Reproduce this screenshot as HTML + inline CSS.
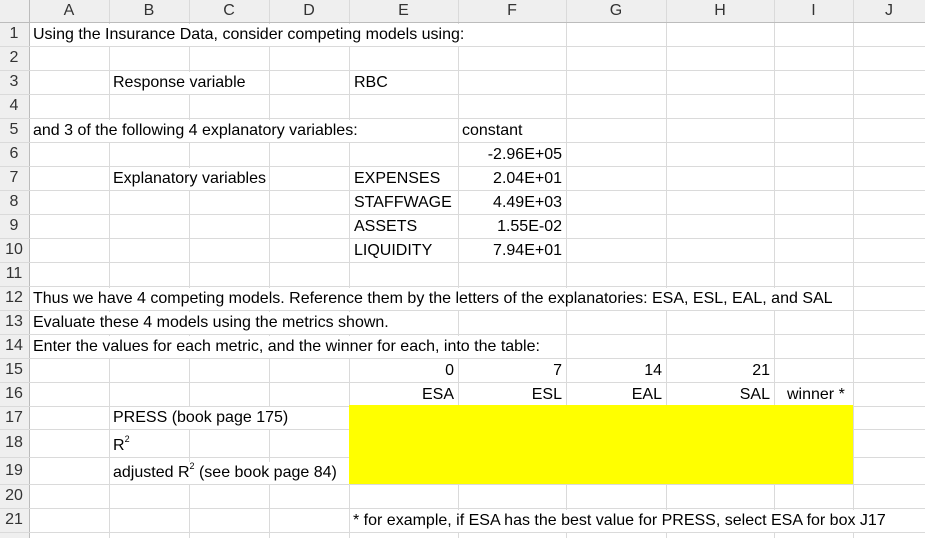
<!DOCTYPE html>
<html><head><style>
body{margin:0;width:925px;height:538px;overflow:hidden;background:#fff;font-family:"Liberation Sans",sans-serif;font-size:16px;color:#000;position:relative}
.v{position:absolute;top:0;height:538px;width:1px;background:#dadada}
.h{position:absolute;left:0;width:925px;height:1px;background:#dadada}
.t{position:absolute;white-space:nowrap;line-height:22px;height:22px;margin-top:2px}
.w{background:#fff;padding-right:3px}
.r{text-align:right}
.ch{position:absolute;top:0;height:22px;line-height:22px;text-align:center;color:#333;font-size:16px}
.rh{position:absolute;left:0;width:28px;text-align:center;color:#333;font-size:16px}
sup{font-size:9px;vertical-align:8px;line-height:0}
</style></head><body>
<div style="position:absolute;left:0;top:0;width:925px;height:22px;background:#efefef"></div>
<div style="position:absolute;left:0;top:0;width:29px;height:538px;background:#efefef"></div>
<div id="g"></div>
<div style="position:absolute;left:349px;top:405px;width:504px;height:79px;background:#ffff00"></div>
<script>
var xs=[29,109,189,269,349,458,566,666,774,853];
var ys=[22];for(var i=1;i<=16;i++)ys.push(22+i*24);ys.push(429,457,484,508,532);
var h='';
xs.forEach(function(x){h+='<div class="v" style="left:'+x+'px'+(x==29?';background:#bcbcbc':'')+'"></div>';});
ys.forEach(function(y){h+='<div class="h" style="top:'+y+'px'+(y==22?';background:#bcbcbc':'')+'"></div>';});
var L='ABCDEFGHIJ';var ex=xs.concat([925]);
for(var i=0;i<10;i++)h+='<div class="ch" style="left:'+ex[i]+'px;width:'+(ex[i+1]-ex[i])+'px">'+L[i]+'</div>';
for(var i=0;i<21;i++)h+='<div class="rh" style="top:'+ys[i]+'px;height:'+(ys[i+1]-ys[i])+'px;line-height:'+(ys[i+1]-ys[i])+'px">'+(i+1)+'</div>';
document.getElementById('g').innerHTML=h;
</script>
<div class="t w" style="left:33px;top:22px">Using the Insurance Data, consider competing models using:</div>
<div class="t w" style="left:113px;top:70px">Response variable</div>
<div class="t" style="left:354px;top:70px">RBC</div>
<div class="t w" style="left:33px;top:118px">and 3 of the following 4 explanatory variables:</div>
<div class="t" style="left:462px;top:118px">constant</div>
<div class="t r" style="left:458px;width:104px;top:142px">-2.96E+05</div>
<div class="t w" style="left:113px;top:166px">Explanatory variables</div>
<div class="t" style="left:354px;top:166px">EXPENSES</div>
<div class="t r" style="left:458px;width:104px;top:166px">2.04E+01</div>
<div class="t w" style="left:354px;top:190px">STAFFWAGE</div>
<div class="t r" style="left:458px;width:104px;top:190px">4.49E+03</div>
<div class="t" style="left:354px;top:214px">ASSETS</div>
<div class="t r" style="left:458px;width:104px;top:214px">1.55E-02</div>
<div class="t" style="left:354px;top:238px">LIQUIDITY</div>
<div class="t r" style="left:458px;width:104px;top:238px">7.94E+01</div>
<div class="t w" style="left:33px;top:286px">Thus we have 4 competing models. Reference them by the letters of the explanatories: ESA, ESL, EAL, and SAL</div>
<div class="t w" style="left:33px;top:310px">Evaluate these 4 models using the metrics shown.</div>
<div class="t w" style="left:33px;top:334px">Enter the values for each metric, and the winner for each, into the table:</div>
<div class="t r" style="left:349px;width:105px;top:358px">0</div>
<div class="t r" style="left:458px;width:104px;top:358px">7</div>
<div class="t r" style="left:566px;width:96px;top:358px">14</div>
<div class="t r" style="left:666px;width:104px;top:358px">21</div>
<div class="t r" style="left:349px;width:105px;top:382px">ESA</div>
<div class="t r" style="left:458px;width:104px;top:382px">ESL</div>
<div class="t r" style="left:566px;width:96px;top:382px">EAL</div>
<div class="t r" style="left:666px;width:104px;top:382px">SAL</div>
<div class="t" style="left:787px;top:382px">winner *</div>
<div class="t w" style="left:113px;top:405px">PRESS (book page 175)</div>
<div class="t" style="left:113px;top:433px">R<sup>2</sup></div>
<div class="t w" style="left:113px;top:460px">adjusted R<sup>2</sup> (see book page 84)</div>
<div class="t w" style="left:353px;top:508px">* for example, if ESA has the best value for PRESS, select ESA for box J17</div>
</body></html>
